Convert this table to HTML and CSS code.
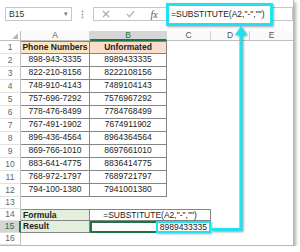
FILE: index.html
```html
<!DOCTYPE html>
<html lang="en">

<head>
  <meta charset="UTF-8" />
  <title>SUBSTITUTE phone numbers</title>
  <link rel="stylesheet" href="styles.css">
</head>

<body>
  <div class="shot">
    <div class="fbar">
      <div class="namebox">
        <span>B15</span>
        <span class="drop">&#9662;</span>
      </div>
      <div class="grip">
        <svg width="3" height="9" viewBox="0 0 3 9"><circle cx="1.5" cy="1.5" r="0.9" /><circle cx="1.5" cy="4.5" r="0.9" /><circle cx="1.5" cy="7.5" r="0.9" /></svg>
      </div>
      <div class="fbox">
        <div class="fbtn">
          <svg width="8" height="8" viewBox="0 0 8 8"><path d="M1 1 L7 7 M7 1 L1 7" /></svg>
        </div>
        <div class="fbtn">
          <svg width="9" height="8" viewBox="0 0 9 8"><path d="M1 4.2 L3.4 6.6 L8 1.2" /></svg>
        </div>
        <div class="fbtn fx">fx</div>
        <div class="finput">=SUBSTITUTE(A2,"-","")</div>
      </div>
    </div>

    <div class="sheet">
      <div class="row head">
        <div class="rh corner">
          <svg width="6" height="6" viewBox="0 0 6 6"><polygon points="6,0 6,6 0,6" /></svg>
        </div>
        <div class="colhd ca">A</div>
        <div class="colhd cb on">B</div>
        <div class="colhd cc">C</div>
        <div class="colhd cd">D</div>
        <div class="colhd ce">E</div>
      </div>

      <div class="row">
        <div class="rh">1</div>
        <div class="cell ca tb top bold ph">Phone Numbers</div>
        <div class="cell cb tb top bold uf">Unformated</div>
      </div>
      <div class="row">
        <div class="rh">2</div>
        <div class="cell ca tb">898-943-3335</div>
        <div class="cell cb tb">8989433335</div>
      </div>
      <div class="row">
        <div class="rh">3</div>
        <div class="cell ca tb">822-210-8156</div>
        <div class="cell cb tb">8222108156</div>
      </div>
      <div class="row">
        <div class="rh">4</div>
        <div class="cell ca tb">748-910-4143</div>
        <div class="cell cb tb">7489104143</div>
      </div>
      <div class="row">
        <div class="rh">5</div>
        <div class="cell ca tb">757-696-7292</div>
        <div class="cell cb tb">7576967292</div>
      </div>
      <div class="row">
        <div class="rh">6</div>
        <div class="cell ca tb">778-476-8499</div>
        <div class="cell cb tb">7784768499</div>
      </div>
      <div class="row">
        <div class="rh">7</div>
        <div class="cell ca tb">767-491-1902</div>
        <div class="cell cb tb">7674911902</div>
      </div>
      <div class="row">
        <div class="rh">8</div>
        <div class="cell ca tb">896-436-4564</div>
        <div class="cell cb tb">8964364564</div>
      </div>
      <div class="row">
        <div class="rh">9</div>
        <div class="cell ca tb">869-766-1010</div>
        <div class="cell cb tb">8697661010</div>
      </div>
      <div class="row">
        <div class="rh">10</div>
        <div class="cell ca tb">883-641-4775</div>
        <div class="cell cb tb">8836414775</div>
      </div>
      <div class="row">
        <div class="rh">11</div>
        <div class="cell ca tb">768-972-1797</div>
        <div class="cell cb tb">7689721797</div>
      </div>
      <div class="row">
        <div class="rh">12</div>
        <div class="cell ca tb">794-100-1380</div>
        <div class="cell cb tb">7941001380</div>
      </div>

      <div class="row sm">
        <div class="rh">13</div>
      </div>
      <div class="row sm">
        <div class="rh">14</div>
        <div class="cell ca tb top bold lbl">Formula</div>
        <div class="cell cbc tb top">=SUBSTITUTE(A2,"-","")</div>
      </div>
      <div class="row sm">
        <div class="rh on">15</div>
        <div class="cell ca tb bold lbl">Result</div>
        <div class="cell cbc picked">
          <span class="res">8989433335</span>
        </div>
      </div>
      <div class="row sm">
        <div class="rh">16</div>
      </div>
    </div>

    <!-- callout from the formula bar down to the result -->
    <svg class="callout" width="294" height="246" viewBox="0 0 294 246">
      <path d="M241 33 V229.5 H212" />
      <polygon points="241,26 235,35 247,35" />
    </svg>
  </div>
</body>

</html>
```

FILE: styles.css
```css
body {
  margin: 0;
  background-color: #fff;
  font-family: "Liberation Sans", Arial, sans-serif;
  color: #222;
}

.shot {
  position: relative;
  width: 294px;
  height: 246px;
  box-sizing: border-box;
  overflow: hidden;
  background-color: #fff;
  border-right: 1px solid #b8b8b8;
  border-bottom: 1px solid #b8b8b8;
  box-shadow: 2px 2px 3px rgba(0, 0, 0, 0.3);
}

/* formula bar */
.fbar {
  display: flex;
  align-items: flex-start;
  height: 31px;
  padding-top: 7px;
  box-sizing: border-box;
}

.namebox {
  margin-left: 5px;
  width: 67px;
  height: 14px;
  box-sizing: border-box;
  border: 1px solid #c6c6c6;
  display: flex;
  align-items: center;
  justify-content: space-between;
  padding: 0 3px 0 3px;
  font-size: 8.5px;
  color: #333;
}

.drop {
  font-size: 7px;
  color: #777;
}

.grip {
  width: 21px;
  height: 14px;
  display: flex;
  align-items: center;
  justify-content: center;
}

.grip svg {
  fill: #9a9a9a;
}

.fbox {
  flex: 1;
  height: 14px;
  box-sizing: border-box;
  border: 1px solid #c6c6c6;
  display: flex;
  align-items: center;
}

.fbtn {
  width: 24px;
  flex: none;
  display: flex;
  align-items: center;
  justify-content: center;
}

.fbtn svg {
  fill: none;
  stroke: #a8a8a8;
  stroke-width: 1.1;
}

.fx {
  font-family: "Liberation Serif", "Times New Roman", serif;
  font-style: italic;
  font-size: 10px;
  color: #555;
}

.finput {
  flex: none;
  width: 107px;
  height: 23px;
  box-sizing: border-box;
  border: 3px solid #1fe1ef;
  box-shadow: 1px 1px 2px rgba(0, 0, 0, 0.35);
  background-color: #fff;
  padding-left: 2px;
  display: flex;
  align-items: center;
  font-size: 8.5px;
  color: #222;
  white-space: nowrap;
}

/* sheet */
.row {
  display: flex;
  height: 13px;
}

.row.sm {
  height: 12px;
}

.row.head {
  height: 10px;
}

.rh {
  width: 21px;
  flex: none;
  box-sizing: border-box;
  border-right: 1px solid #bfbfbf;
  border-bottom: 1px solid #e2e2e2;
  text-align: center;
  font-size: 8.5px;
  line-height: 12px;
  color: #666;
}

.row.sm .rh {
  line-height: 11px;
}

.rh.on {
  background-color: #d4d4d4;
  border-right: 2px solid #217346;
  color: #217346;
}

.corner {
  display: flex;
  align-items: flex-end;
  justify-content: flex-end;
  padding: 0 2px 1px 0;
  border-bottom: 1px solid #c0c0c0;
}

.corner svg {
  fill: #b8b8b8;
}

.colhd {
  flex: none;
  box-sizing: border-box;
  background-color: #fafafa;
  border-right: 1px solid #d2d2d2;
  border-bottom: 1px solid #c0c0c0;
  text-align: center;
  font-size: 8.5px;
  line-height: 9px;
  color: #555;
}

.colhd.on {
  background-color: #d6d6d6;
  border-bottom: 2px solid #217346;
  color: #217346;
}

.cell {
  flex: none;
  box-sizing: border-box;
  text-align: center;
  font-size: 8.5px;
  line-height: 11px;
  white-space: nowrap;
  overflow: hidden;
}

.ca { width: 69px; }
.cb { width: 77px; }
.cc { width: 44px; }
.cd { width: 39px; }
.ce { width: 44px; }
.cbc { width: 121px; }

.tb {
  border-right: 1px solid #858585;
  border-bottom: 1px solid #858585;
}

.top {
  border-top: 1px solid #858585;
}

.row.sm .cell {
  line-height: 10px;
}

.bold {
  font-weight: bold;
}

.ph {
  background-color: #fce6c0;
}

.uf {
  background-color: #fcdccb;
}

.lbl {
  background-color: #e2efda;
  text-align: left;
  padding-left: 2px;
}

.picked {
  border: 2px solid #217346;
  display: flex;
  align-items: center;
  justify-content: flex-end;
  overflow: visible;
}

.res {
  height: 12px;
  margin-right: -2px;
  box-sizing: border-box;
  border: 2px solid #1fe1ef;
  box-shadow: 1px 1px 2px rgba(0, 0, 0, 0.35);
  background-color: #fff;
  padding: 0 2px;
  line-height: 8px;
}

.callout {
  position: absolute;
  left: 0;
  top: 0;
  pointer-events: none;
  filter: drop-shadow(1px 1px 1px rgba(0, 0, 0, 0.4));
}

.callout path {
  fill: none;
  stroke: #1fe1ef;
  stroke-width: 3;
}

.callout polygon {
  fill: #1fe1ef;
}
```
